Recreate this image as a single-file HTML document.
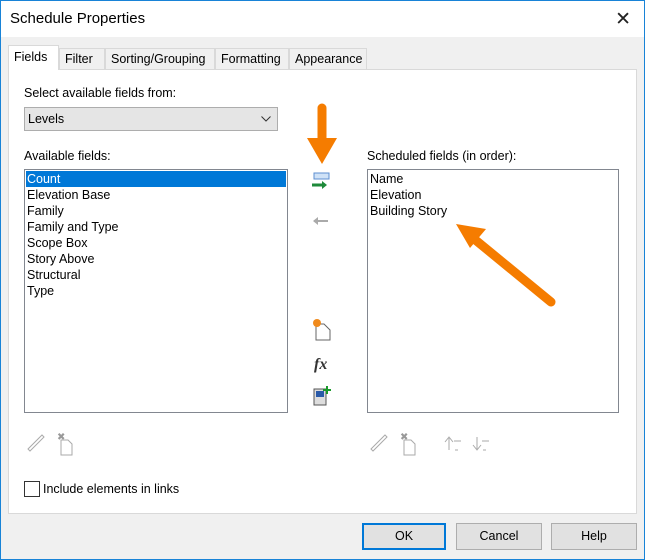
<!DOCTYPE html>
<html><head><style>
*{box-sizing:border-box;margin:0;padding:0}
body{width:645px;height:560px;overflow:hidden;font-family:"Liberation Sans",sans-serif;font-size:12px;color:#000;background:#fff}
.win{position:absolute;left:0;top:0;width:645px;height:560px;background:#f0f0f0}
.frame{position:absolute;left:0;top:0;width:645px;height:560px;border:1px solid #1883d7;z-index:5;pointer-events:none}
.title{position:absolute;left:0;top:0;width:645px;height:37px;background:#fff;font-size:15px;padding:10px 0 0 10px}
.close{position:absolute;right:14px;top:8px;font-size:19px;font-weight:100;color:#222;font-family:"DejaVu Sans",sans-serif}
.panel{position:absolute;left:8px;top:69px;width:629px;height:445px;background:#fff;border:1px solid #d9d9d9}
.tab{position:absolute;top:48px;height:21px;border:1px solid #d9d9d9;border-bottom:none;background:#f0f0f0;padding:3px 5px 0;font-size:12.5px}
.tab.a{top:45px;height:25px;background:#fff;padding-top:4px;z-index:2}
.abs{position:absolute}
.list{position:absolute;border:1px solid #828790;background:#fff;padding:1px 2px;line-height:16px;font-size:12.5px}
.sel{background:#0078d7;color:#fff;margin:0 -1px;padding-left:1px}
.btn{position:absolute;top:523px;height:27px;background:#e1e1e1;border:1px solid #adadad;text-align:center;line-height:25px;font-size:12.5px}
</style></head><body>
<div class="win">
<div class="title">Schedule Properties<span class="close">✕</span></div>
<div class="panel"></div>
<div class="tab a" style="left:8px;width:51px">Fields</div>
<div class="tab" style="left:59px;width:46px">Filter</div>
<div class="tab" style="left:105px;width:110px">Sorting/Grouping</div>
<div class="tab" style="left:215px;width:74px">Formatting</div>
<div class="tab" style="left:289px;width:78px">Appearance</div>
<div class="abs" style="left:24px;top:86px;font-size:12.5px">Select available fields from:</div>
<div class="abs" style="left:24px;top:107px;width:254px;height:24px;background:#e5e5e5;border:1px solid #adadad;padding:4px 3px;font-size:12.5px">Levels<svg style="position:absolute;right:6px;top:8px" width="10" height="6"><path d="M0.5 0.5 L5 5 L9.5 0.5" stroke="#333" fill="none"/></svg></div>
<div class="abs" style="left:24px;top:149px;font-size:12.5px">Available fields:</div>
<div class="abs" style="left:367px;top:149px;font-size:12.5px">Scheduled fields (in order):</div>
<div class="list" style="left:24px;top:169px;width:264px;height:244px">
<div class="sel">Count</div><div>Elevation Base</div><div>Family</div><div>Family and Type</div><div>Scope Box</div><div>Story Above</div><div>Structural</div><div>Type</div></div>
<div class="list" style="left:367px;top:169px;width:252px;height:244px">
<div>Name</div><div>Elevation</div><div>Building Story</div></div>
<svg class="abs" style="left:0;top:0" width="645" height="560">
<rect x="314" y="173" width="15" height="6" fill="#cfe2f7" stroke="#5d8fd0"/>
<path d="M312 185h12" stroke="#1e8a3a" stroke-width="3"/><path d="M322 181l5 4-5 4z" fill="#1e8a3a"/>
<path d="M314 221h14" stroke="#aaa" stroke-width="2"/><path d="M318 217l-5 4 5 4z" fill="#aaa"/>
<path d="M316 324h8l6 6v10h-14z" fill="#fff" stroke="#666"/><circle cx="317" cy="323" r="4" fill="#f08a1c"/>
<text x="314" y="369" font-family="Liberation Serif" font-style="italic" font-size="16" font-weight="bold" fill="#333">fx</text>
<rect x="314" y="389" width="12" height="16" fill="#ddd" stroke="#555"/><rect x="316" y="391" width="8" height="6" fill="#2a5aa8"/><path d="M327 386v8M323 390h8" stroke="#1a9a2a" stroke-width="2"/>
<g stroke="#aaa" fill="none"><path d="M28 449l14-14 2 2-14 14z"/><path d="M61 440h7l4 4v11h-11z"/><path d="M371 449l14-14 2 2-14 14z"/><path d="M404 440h7l4 4v11h-11z"/>
<path d="M449 450v-12M445 442l4-5 4 5M454 441h7M455 450h3M477 437v12M473 445l4 5 4-5M482 441h7M483 450h3"/></g>
<text x="57" y="440" fill="#999" font-size="10">✖</text><text x="400" y="440" fill="#999" font-size="10">✖</text>
<path d="M322 108v30" stroke="#f57c00" stroke-width="9" stroke-linecap="round"/><path d="M307 138h30l-15 26z" fill="#f57c00"/>
<path d="M551 302l-78-64" stroke="#f57c00" stroke-width="9" stroke-linecap="round"/><path d="M456 224l30 5-16 19z" fill="#f57c00"/>
</svg>
<div class="abs" style="left:24px;top:481px;width:16px;height:16px;border:1px solid #333;background:#fff"></div>
<div class="abs" style="left:43px;top:482px;font-size:12.5px">Include elements in links</div>
<div class="btn" style="left:362px;width:84px;border:2px solid #0078d7;line-height:23px">OK</div>
<div class="btn" style="left:456px;width:86px">Cancel</div>
<div class="btn" style="left:551px;width:86px">Help</div>
</div>
<div class="frame"></div>
</body></html>
